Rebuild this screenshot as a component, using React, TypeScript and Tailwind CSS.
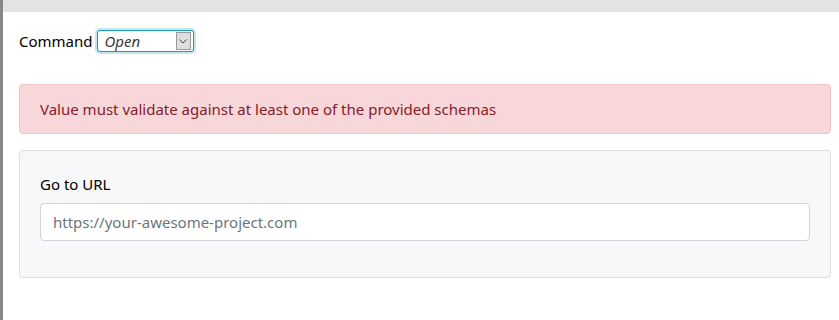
export default function App() {
  return (
    <div
      className="flex h-[320px] w-[839px] bg-white text-[15px] text-black"
      style={{ fontFamily: '"Noto Sans", "Open Sans", sans-serif' }}
    >
      <div className="w-[3px] shrink-0 bg-[#878787]" />
      <div className="flex min-w-0 flex-1 flex-col">
        <div className="h-[12px] shrink-0 bg-[#e3e3e3]" />
        <div className="flex flex-col pl-[16px] pr-[8px]">
          {/* Command select */}
          <div className="mt-[16px] flex items-center gap-[2px]">
            <span>Command</span>
            <div className="rounded-[5px] bg-[#c3e7ed] p-[2px]">
              <div className="flex h-[22px] w-[97px] items-center rounded-[3px] border border-[#1d9cb1] bg-white pl-[7px] pr-[2px]">
                <span className="flex-1 italic text-[#3a3a3a]">Open</span>
                <div className="flex h-[18px] w-[15px] items-center justify-center border border-[#9a9a9a] bg-[#dedede]">
                  <svg width="8" height="5" viewBox="0 0 8 5" fill="none">
                    <path d="M0.5 0.5 L4 4 L7.5 0.5" stroke="#444" strokeWidth="1" />
                  </svg>
                </div>
              </div>
            </div>
          </div>

          {/* Error alert */}
          <div className="mt-[30px] flex h-[50px] items-center rounded-[4px] border border-[#f5c2c7] bg-[#f8d7da] px-[20px] text-[#842029]">
            Value must validate against at least one of the provided schemas
          </div>

          {/* Go to URL card */}
          <div className="mt-[16px] flex h-[128px] flex-col rounded-[4px] border border-[#dcdee2] bg-[#f7f8fa] px-[20px] pt-[23px]">
            <label className="leading-[20px]">Go to URL</label>
            <div className="mt-[9px] flex h-[38px] items-center rounded-[4px] border border-[#ced4da] bg-white px-[12px] text-[#6c757d]">
              https://your-awesome-project.com
            </div>
          </div>
        </div>
      </div>
    </div>
  );
}
